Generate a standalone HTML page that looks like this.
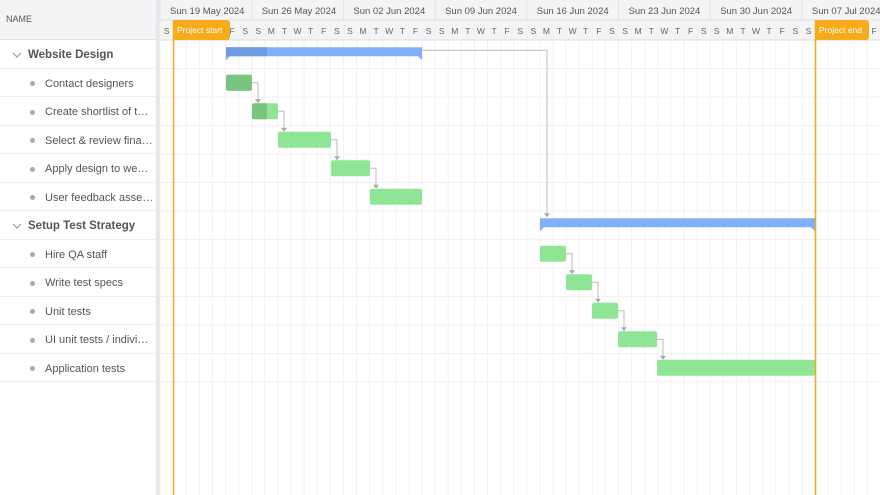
<!DOCTYPE html>
<html><head><meta charset="utf-8"><style>
*{margin:0;padding:0;box-sizing:border-box}
body{width:880px;height:495px;overflow:hidden;background:#fff;font-family:"Liberation Sans",sans-serif;color:#555;position:relative}
#left{position:absolute;left:0;top:0;width:156px;height:495px;background:#fff}
#lhdr{height:40px;background:#f3f4f6;border-bottom:1px solid #e0e0e0;font-size:9px;color:#555;padding:14px 0 0 6px}
.row{height:28.5px;border-bottom:1px solid #eee;font-size:11px;display:flex;align-items:center;white-space:nowrap;overflow:hidden;padding-top:3px}
.g{font-weight:bold;font-size:11.5px;color:#555;padding-left:12px}
.g span{display:inline-block;width:10px;height:10px;margin-right:6px;position:relative}
.t{padding-left:30px}
.t i{display:inline-block;width:5px;height:5px;border-radius:50%;background:#aaa;margin-right:10px}
#split{position:absolute;left:156px;top:0;width:4px;height:495px;background:#e5e7eb}
svg{position:absolute;left:0;top:0}
</style></head><body>
<div id="left">
<div id="lhdr">NAME</div>
<div class="row g"><span><svg width="10" height="10" style="position:static"><path d="M1 3 L5 7 L9 3" fill="none" stroke="#999" stroke-width="1.2"/></svg></span>Website Design</div>
<div class="row t"><i></i>Contact designers</div>
<div class="row t"><i></i>Create shortlist of t…</div>
<div class="row t"><i></i>Select &amp; review fina…</div>
<div class="row t"><i></i>Apply design to we…</div>
<div class="row t"><i></i>User feedback asse…</div>
<div class="row g"><span><svg width="10" height="10" style="position:static"><path d="M1 3 L5 7 L9 3" fill="none" stroke="#999" stroke-width="1.2"/></svg></span>Setup Test Strategy</div>
<div class="row t"><i></i>Hire QA staff</div>
<div class="row t"><i></i>Write test specs</div>
<div class="row t"><i></i>Unit tests</div>
<div class="row t"><i></i>UI unit tests / indivi…</div>
<div class="row t"><i></i>Application tests</div>
</div>
<div id="split"></div>
<svg id="c" width="880" height="495"></svg>
<script>
var s='',D=13.1,X0=160;
s+='<rect x="160" y="0" width="720" height="40" fill="#f3f4f6"/>';
var L='SMTWTFS';
for(var i=0;i<55;i++){var x=X0+i*D;
 s+='<line x1="'+x+'" y1="20" x2="'+x+'" y2="495" stroke="#f2f2f2" stroke-width="1"/>';
 s+='<text x="'+(x+D/2)+'" y="34" font-size="8.5" fill="#666" text-anchor="middle">'+L[i%7]+'</text>';}
var W=['Sun 19 May 2024','Sun 26 May 2024','Sun 02 Jun 2024','Sun 09 Jun 2024','Sun 16 Jun 2024','Sun 23 Jun 2024','Sun 30 Jun 2024','Sun 07 Jul 2024'];
for(var w=0;w<8;w++){var x=X0+w*7*D;
 s+='<line x1="'+x+'" y1="0" x2="'+x+'" y2="20" stroke="#e2e2e2"/>';
 s+='<text x="'+(x+10)+'" y="14" font-size="9.5" fill="#555">'+W[w]+'</text>';}
s+='<line x1="160" y1="20" x2="880" y2="20" stroke="#e2e2e2"/><line x1="160" y1="40" x2="880" y2="40" stroke="#ddd"/>';
for(var r=1;r<=12;r++){var y=40+r*28.5;s+='<line x1="160" y1="'+y+'" x2="880" y2="'+y+'" stroke="#f0f0f0"/>';}
function cy(r){return 40+r*28.5+14.25}
function sum(x1,x2,r){var y=cy(r)-7;s+='<path d="M'+x1+' '+y+'h'+(x2-x1)+'v'+13+'l-4 -4H'+(x1+4)+'l-4 4z" fill="#80b0fb"/>';}
function bar(x1,x2,r,dk){var y=cy(r)-8;s+='<rect x="'+x1+'" y="'+y+'" width="'+(x2-x1)+'" height="16" rx="2" fill="#8fe595"/>';if(dk)s+='<rect x="'+x1+'" y="'+y+'" width="'+dk+'" height="16" rx="2" fill="#7ac47f"/>';}
function dep(x1,r1,x2,r2){var y1=cy(r1),y2=cy(r2)-8;s+='<path d="M'+x1+' '+y1+'H'+(x2+6)+'V'+(y2-3)+'" fill="none" stroke="#bbb"/><path d="M'+(x2+3)+' '+(y2-4)+'l3 4 3 -4z" fill="#aaa"/>';}
sum(226,422,0);s+='<rect x="226" y="'+(cy(0)-7)+'" width="41" height="9" fill="#6f9ae0"/>';
bar(226,252,1,26);bar(252,278,2,15);bar(278,331,3);bar(331,370,4);bar(370,422,5);
dep(252,1,252,2);dep(278,2,278,3);dep(331,3,331,4);dep(370,4,370,5);
s+='<path d="M422 '+(cy(0)-4)+'H547V'+(cy(6)-11)+'" fill="none" stroke="#bbb"/><path d="M544 '+(cy(6)-12)+'l3 4 3 -4z" fill="#aaa"/>';
sum(540,815,6);
bar(540,566,7);bar(566,592,8);bar(592,618,9);bar(618,657,10);bar(657,815,11);
dep(566,7,566,8);dep(592,8,592,9);dep(618,9,618,10);dep(657,10,657,11);
s+='<line x1="173.5" y1="20" x2="173.5" y2="495" stroke="#f5a623" stroke-width="1.5"/><rect x="173" y="20" width="57" height="20" rx="3" fill="#f7ab1a"/><text x="177" y="33" font-size="8.5" fill="#fff">Project start</text>';
s+='<line x1="815.5" y1="20" x2="815.5" y2="495" stroke="#f5a623" stroke-width="1.5"/><rect x="815" y="20" width="54" height="20" rx="3" fill="#f7ab1a"/><text x="819" y="33" font-size="8.5" fill="#fff">Project end</text>';
document.getElementById('c').innerHTML=s;
</script>
</body></html>
